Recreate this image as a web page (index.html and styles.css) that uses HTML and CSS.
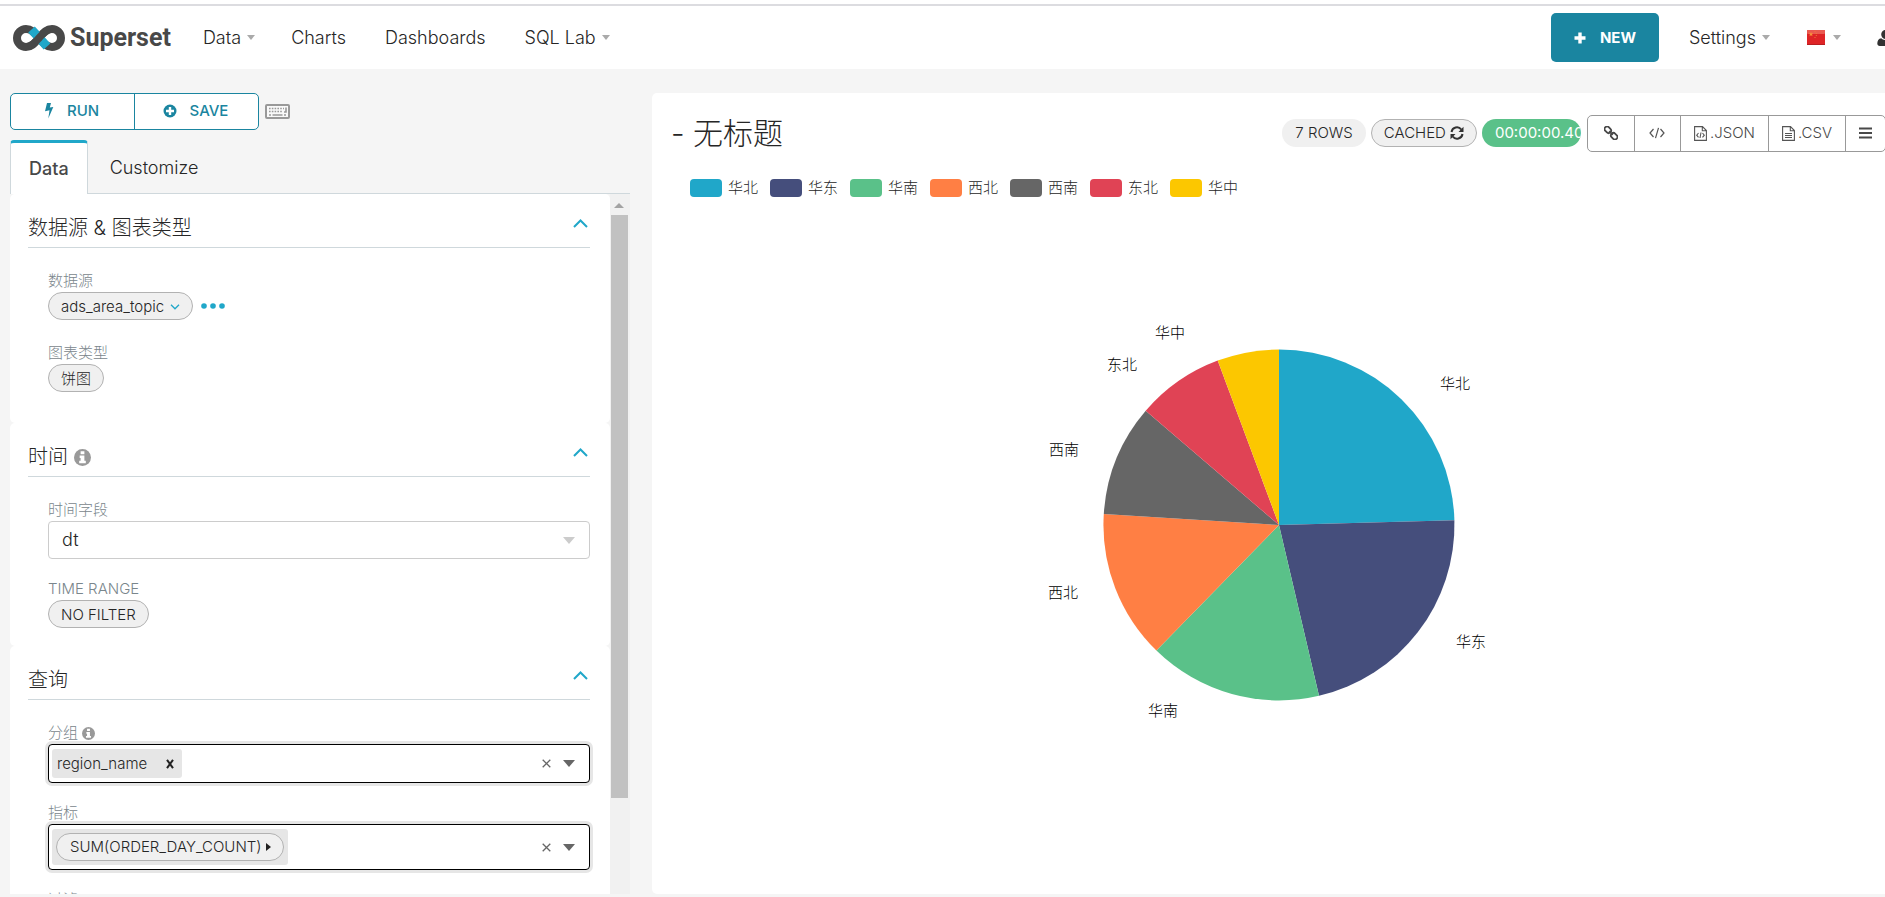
FILE: index.html
```html
<!DOCTYPE html>
<html lang="zh-CN">
<head>
<meta charset="utf-8">
<meta name="viewport" content="width=device-width, initial-scale=1">
<title>Superset</title>
<link rel="stylesheet" href="styles.css">
</head>
<body>
<header class="navbar">
  <a class="brand" href="#" aria-label="Superset">
    <svg class="brand-mark" viewBox="0 0 52 26" aria-hidden="true">
      <path d="M26 13 C21 7 18 4 13 4 A9 9 0 0 0 13 22 C18 22 21 19 26 13 C31 7 34 4 39 4 A9 9 0 0 1 39 22 C34 22 31 19 26 13" fill="none" stroke="#484848" stroke-width="8"/>
      <path d="M18.500 4.500L34 21.500" stroke="#20a7c9" stroke-width="9"/>
      <path d="M15 21.700C20 20.500 23 16.500 26 13C29 9.500 32 5.500 37 4.300" fill="none" stroke="#484848" stroke-width="7.500"/>
    </svg>
    <span class="brand-name">Superset</span>
  </a>
  <nav class="menu">
    <a href="#">Data <i class="caret"></i></a>
    <a href="#">Charts</a>
    <a href="#">Dashboards</a>
    <a href="#">SQL Lab <i class="caret"></i></a>
  </nav>
  <div class="menu-right">
    <button class="btn-new" type="button">
      <svg width="12" height="12" viewBox="0 0 12 12" aria-hidden="true"><path d="M6 0.500V11.500M0.500 6H11.500" stroke="#fff" stroke-width="3.400"/></svg>
      NEW
    </button>
    <a class="settings" href="#">Settings <i class="caret"></i></a>
    <a class="language" href="#" aria-label="中文">
      <svg width="18" height="15" viewBox="0 0 18 15" aria-hidden="true"><rect width="18" height="15" rx="1" fill="#de2426"/><rect width="18" height="4" rx="1" fill="#ea5a50"/><path d="M4 2l.7 1.500 1.600.1-1.300 1 .5 1.600L4 5.300 2.500 6.200 3 4.600l-1.300-1 1.600-.1z" fill="#f6933a"/><path d="M7.500 1.500h1M8.800 3.500h1M8.800 5.500h1M7.500 7.500h1" stroke="#ee7a3a"/><path d="M0 14.500h18" stroke="#b81d20"/></svg>
      <i class="caret"></i>
    </a>
    <a class="user" href="#" aria-label="User">
      <svg width="17" height="16" viewBox="0 0 17 16" aria-hidden="true"><path d="M4.200 4.200a4.300 4.300 0 0 1 8.600 0c0 2.600-1.900 4.800-4.300 4.800S4.200 6.800 4.200 4.200zM4.300 8.200C1.500 8.600.3 10.800.3 13.500.3 15 1.300 16 2.800 16h11.400c1.500 0 2.500-1 2.500-2.500 0-2.700-1.200-4.900-4-5.300-1.100 1.100-2.500 1.800-4.200 1.800s-3.100-.7-4.200-1.800z" fill="#323232"/></svg>
    </a>
  </div>
</header>

<main class="explore">
  <section class="controls">
    <div class="actions">
      <div class="query-buttons">
        <button type="button">
          <svg width="10" height="16" viewBox="0 0 10 16" aria-hidden="true"><path d="M3 0h4L5.800 4.600 9.300 4 4.300 15.500 5.500 7.300 1 8.300z" fill="#1a85a0"/></svg>
          RUN
        </button>
        <button type="button">
          <svg width="14" height="14" viewBox="0 0 14 14" aria-hidden="true"><circle cx="7" cy="7" r="6.500" fill="#1a85a0"/><path d="M7 3v8M3 7h8" stroke="#fff" stroke-width="2.400"/></svg>
          SAVE
        </button>
      </div>
      <svg class="keyboard" width="25" height="15" viewBox="0 0 25 15" aria-hidden="true"><rect x="1" y="1" width="23" height="13" rx="1" fill="#f9f9f9" stroke="#999" stroke-width="2"/><path d="M4 4.500h15M4 7.500h14" stroke="#999" stroke-width="1.600" stroke-dasharray="1.600 1.200"/><path d="M21 3.500v4.500h-2M4 11h2M7.500 11h10M19 11h2" fill="none" stroke="#999" stroke-width="1.600"/></svg>
    </div>
    <div class="tabs" role="tablist">
      <button class="tab tab-active" type="button" role="tab" aria-selected="true">Data</button>
      <button class="tab" type="button" role="tab" aria-selected="false">Customize</button>
    </div>
    <div class="scroller">
      <div class="sections">
        <section class="panel panel-source">
          <h2 class="panel-title">数据源 &amp; 图表类型
            <svg class="chevron" viewBox="0 0 15 9" aria-hidden="true"><path d="M1 8l6.500-6.500L14 8"/></svg></h2>
          <div class="field">
            <span class="label">数据源</span>
            <div class="source-row">
              <button class="chip" type="button">ads_area_topic
                <svg width="10" height="6" viewBox="0 0 10 6" aria-hidden="true"><path d="M1 .8l4 4 4-4" fill="none" stroke="#20a7c9" stroke-width="1.300"/></svg></button>
              <button class="more" type="button" aria-label="More">
                <svg width="24" height="6" viewBox="0 0 24 6" aria-hidden="true"><g fill="#20a7c9"><circle cx="3" cy="3" r="2.800"/><circle cx="12" cy="3" r="2.800"/><circle cx="21" cy="3" r="2.800"/></g></svg>
              </button>
            </div>
          </div>
          <div class="field">
            <span class="label">图表类型</span>
            <button class="chip" type="button">饼图</button>
          </div>
        </section>

        <section class="panel">
          <h2 class="panel-title"><span class="with-info">时间
            <svg class="info info-lg" viewBox="0 0 18 18" aria-hidden="true"><circle cx="9" cy="9" r="9" fill="#999"/><path d="M7 2.500h4v3H7zM6 7h5v5.500h1.500V15H5.500v-2.500H7v-3H6z" fill="#fff"/></svg></span>
            <svg class="chevron" viewBox="0 0 15 9" aria-hidden="true"><path d="M1 8l6.500-6.500L14 8"/></svg></h2>
          <div class="field">
            <label class="label" for="time-column">时间字段</label>
            <div class="select-wrap">
              <select id="time-column"><option>dt</option></select>
              <i class="arrow arrow-muted"></i>
            </div>
          </div>
          <div class="field">
            <span class="label">TIME RANGE</span>
            <button class="chip" type="button">NO FILTER</button>
          </div>
        </section>

        <section class="panel">
          <h2 class="panel-title">查询
            <svg class="chevron" viewBox="0 0 15 9" aria-hidden="true"><path d="M1 8l6.500-6.500L14 8"/></svg></h2>
          <div class="field">
            <label class="label with-info" for="groupby">分组
              <svg class="info" viewBox="0 0 18 18" aria-hidden="true"><circle cx="9" cy="9" r="9" fill="#999"/><path d="M7 2.500h4v3H7zM6 7h5v5.500h1.500V15H5.500v-2.500H7v-3H6z" fill="#fff"/></svg></label>
            <div class="multi">
              <span class="tag">region_name
                <button type="button" aria-label="Remove region_name"><svg width="8" height="10" viewBox="0 0 8 10" aria-hidden="true"><path d="M1 .8l6 8.400M7 .8L1 9.200" stroke="#222" stroke-width="2"/></svg></button></span>
              <input id="groupby" type="text">
              <button class="clear" type="button" aria-label="Clear"><svg width="9" height="9" viewBox="0 0 9 9" aria-hidden="true"><path d="M.7 .7l7.600 7.600M8.300 .7L.7 8.300" stroke="#666" stroke-width="1.300"/></svg></button>
              <i class="arrow"></i>
            </div>
          </div>
          <div class="field">
            <label class="label" for="metrics">指标</label>
            <div class="multi">
              <span class="tag tag-metric">
                <button class="chip" type="button">SUM(ORDER_DAY_COUNT)
                  <svg width="5" height="8" viewBox="0 0 5 8" aria-hidden="true"><path d="M0 0l5 4-5 4z" fill="#222"/></svg></button></span>
              <input id="metrics" type="text">
              <button class="clear" type="button" aria-label="Clear"><svg width="9" height="9" viewBox="0 0 9 9" aria-hidden="true"><path d="M.7 .7l7.600 7.600M8.300 .7L.7 8.300" stroke="#666" stroke-width="1.300"/></svg></button>
              <i class="arrow"></i>
            </div>
          </div>
          <div class="field"><span class="label">过滤</span></div>
        </section>
      </div>
      <div class="scrollbar" aria-hidden="true"><i class="scroll-up"></i><i class="scroll-thumb"></i></div>
    </div>
  </section>

  <section class="chart-panel">
    <div class="chart-header">
      <h1>- 无标题</h1>
      <div class="chart-tools">
        <span class="badge">7 ROWS</span>
        <button class="badge badge-cached" type="button">CACHED
          <svg width="14" height="14" viewBox="0 0 14 14" aria-hidden="true"><path d="M1.500 6A5.500 5.500 0 0 1 11.300 3.500M12.500 8A5.500 5.500 0 0 1 2.700 10.500" fill="none" stroke="#323232" stroke-width="2"/><path d="M13.500 .8V6H8.500zM.5 13.200V8h5z" fill="#323232"/></svg></button>
        <span class="badge badge-time">00:00:00.40</span>
        <div class="button-group">
          <button type="button" aria-label="Link"><svg width="14" height="14" viewBox="0 0 14 14" aria-hidden="true"><g fill="none" stroke="#484848" stroke-width="1.800" transform="rotate(45 7 7)"><rect x="-1" y="4.500" width="7" height="5" rx="2.300"/><rect x="8" y="4.500" width="7" height="5" rx="2.300"/><path d="M4.500 7h5"/></g></svg></button>
          <button type="button" aria-label="Embed code"><svg width="16" height="12" viewBox="0 0 16 12" aria-hidden="true"><path d="M4.500 2L1 6l3.500 4M11.500 2L15 6l-3.500 4M9.500 .8L6.500 11.200" fill="none" stroke="#555" stroke-width="1.200"/></svg></button>
          <button type="button"><svg width="13" height="15" viewBox="0 0 13 15" aria-hidden="true"><path d="M.6 .6h7.900l3.900 3.900v9.900H.6zM8.300 .6v4.100h4.100M4.500 7L2.700 9.200l1.800 2.200M8.500 7l1.800 2.200-1.800 2.200M7 6.500L6 12" fill="none" stroke="#555" stroke-width="1.100"/></svg>.JSON</button>
          <button type="button"><svg width="13" height="15" viewBox="0 0 13 15" aria-hidden="true"><path d="M.6 .6h7.900l3.900 3.900v9.900H.6zM8.300 .6v4.100h4.100M3 7.500h7M3 9.500h7M3 11.500h7" fill="none" stroke="#555" stroke-width="1.100"/></svg>.CSV</button>
          <button type="button" aria-label="Menu"><svg width="13" height="12" viewBox="0 0 13 12" aria-hidden="true"><path d="M0 1.500h13M0 6h13M0 10.500h13" stroke="#484848" stroke-width="2"/></svg></button>
        </div>
      </div>
    </div>
    <ul class="legend">
      <li><i class="swatch c1"></i>华北</li>
      <li><i class="swatch c2"></i>华东</li>
      <li><i class="swatch c3"></i>华南</li>
      <li><i class="swatch c4"></i>西北</li>
      <li><i class="swatch c5"></i>西南</li>
      <li><i class="swatch c6"></i>东北</li>
      <li><i class="swatch c7"></i>华中</li>
    </ul>
    <div class="chart">
      <svg width="500" height="430" viewBox="0 0 500 430" role="img" aria-label="饼图">
        <path class="c1" d="M250 225V49.500A175.500 175.500 0 0 1 425.400 220.200z"/>
        <path class="c2" d="M250 225L425.400 220.200A175.500 175.500 0 0 1 290 395.800z"/>
        <path class="c3" d="M250 225L290 395.800A175.500 175.500 0 0 1 127.400 350.600z"/>
        <path class="c4" d="M250 225L127.400 350.600A175.500 175.500 0 0 1 74.800 214z"/>
        <path class="c5" d="M250 225L74.800 214A175.500 175.500 0 0 1 116.700 110.800z"/>
        <path class="c6" d="M250 225L116.700 110.800A175.500 175.500 0 0 1 188.700 60.600z"/>
        <path class="c7" d="M250 225L188.700 60.600A175.500 175.500 0 0 1 250 49.500z"/>
        <text x="411" y="89">华北</text>
        <text x="427" y="347">华东</text>
        <text x="119" y="416">华南</text>
        <text x="19" y="298">西北</text>
        <text x="20" y="155">西南</text>
        <text x="78" y="70">东北</text>
        <text x="126" y="38">华中</text>
      </svg>
    </div>
  </section>
</main>
</body>
</html>
```

FILE: styles.css
```css
* { box-sizing: border-box; }

body {
  margin: 0;
  height: 100vh;
  display: flex;
  flex-direction: column;
  overflow: hidden;
  background: #f5f5f5;
  color: #262626;
  font-family: Inter, "Noto Sans CJK SC", sans-serif;
  font-size: 15px;
  font-weight: 300;
  line-height: 20px;
}

a { color: inherit; text-decoration: none; }
button, input, select { font: inherit; color: inherit; }
button { border: 0; padding: 0; background: none; cursor: pointer; }
svg { display: block; flex: none; }
h1, h2, ul { margin: 0; padding: 0; font-weight: 300; }
i { display: block; flex: none; }

/* Navigation */
.navbar {
  flex: none;
  display: flex;
  align-items: center;
  height: 69px;
  margin-right: -21px;
  padding: 6px 12px 0 13px;
  background: #fff linear-gradient(#dcdce0, #dcdce0) 0 4px / 100% 2px no-repeat;
  font-size: 18px;
}
.brand { display: flex; align-items: center; gap: 5px; }
.brand-mark { width: 52px; height: 26px; }
.brand-name {
  color: #484848;
  font-family: Roboto, sans-serif;
  font-size: 25px;
  font-weight: 700;
}
.menu { display: flex; gap: 39px; margin-left: 32px; }
.menu a, .menu-right a { display: flex; align-items: center; gap: 6px; }
.menu-right { display: flex; align-items: center; margin-left: auto; }
.caret {
  margin-right: -3px;
  border: 4px solid transparent;
  border-top: 5px solid #aaa;
  border-bottom: 0;
}
.btn-new {
  display: flex;
  align-items: center;
  justify-content: center;
  gap: 14px;
  width: 108px;
  height: 49px;
  border-radius: 5px;
  background: #1a85a0;
  color: #fff;
  font-size: 15px;
  font-weight: 700;
}
.settings { margin-left: 30px; }
.language { margin-left: 40px; }
.menu-right .language { gap: 8px; }
.user { margin-left: 39px; }

/* Page columns */
.explore {
  flex: 1;
  min-height: 0;
  display: flex;
  gap: 22px;
  margin-right: -21px;
  padding: 24px 0 3px 10px;
}
.controls { flex: none; width: 620px; display: flex; flex-direction: column; }

.actions { display: flex; align-items: center; gap: 6px; }
.query-buttons { display: flex; width: 249px; border: 1px solid #1a85a0; border-radius: 5px; background: #fff; }
.query-buttons button {
  flex: 1;
  display: flex;
  align-items: center;
  justify-content: center;
  gap: 13px;
  height: 35px;
  padding: 0 2px 2px 0;
  color: #1a85a0;
  font-weight: 500;
}
.query-buttons button + button { border-left: 1px solid #1a85a0; }

.tabs { display: flex; margin-top: 10px; border-bottom: 1px solid #cfd8dc; font-size: 18px; }
.tab { height: 53px; padding: 2px 22px 0; }
.tab-active {
  margin-bottom: -1px;
  height: 54px;
  padding: 0 18px;
  border: 1px solid #cfd8dc;
  border-top: 3px solid #20a7c9;
  border-bottom: 0;
  border-radius: 4px 4px 0 0;
  background: #fff;
  color: #484848;
  font-weight: 500;
}

.scroller { flex: 1; min-height: 0; display: flex; }
.sections { flex: 1; overflow: hidden; }
.scrollbar { width: 20px; padding: 0 2px 0 1px; background: #f1f1f1; }
.scroll-up {
  width: 10px;
  margin: 9px 3px 7px;
  border: 5px solid transparent;
  border-top: 0;
  border-bottom: 5px solid #a3a3a3;
}
.scroll-thumb { height: 83.3%; background: #c1c1c1; }

/* Control panels */
.panel {
  display: flex;
  flex-direction: column;
  gap: 19px;
  padding: 19px 20px 18px 18px;
  border-radius: 5px;
  background: #fff;
}
.panel-source { gap: 22px; padding-bottom: 31px; }
.panel-title {
  display: flex;
  justify-content: space-between;
  margin-bottom: 3px;
  padding-bottom: 4px;
  border-bottom: 1px solid #cfd8dc;
  font-size: 20px;
  line-height: 30px;
}
.panel-source .panel-title { margin-bottom: 0; }
.chevron { width: 15px; height: 9px; margin: 6px 2px 0 0; fill: none; stroke: #20a7c9; stroke-width: 2; }
.with-info { display: flex; align-items: center; gap: 6px; }
.info { width: 13px; height: 13px; }
.info-lg { width: 17px; height: 17px; }
.field { display: flex; flex-direction: column; align-items: flex-start; padding-left: 20px; }
.label { color: #7a868c; line-height: 22px; }
.label.with-info { gap: 4px; }
.source-row { display: flex; align-items: center; gap: 8px; }
.chip {
  display: flex;
  align-items: center;
  gap: 6px;
  height: 28px;
  padding: 1px 12px 0;
  border: 1px solid #b2b2b2;
  border-radius: 14px;
  background: #f0f0f0;
}

.select-wrap { align-self: stretch; display: grid; align-items: center; }
.select-wrap > * { grid-area: 1 / 1; }
.select-wrap select {
  height: 38px;
  padding: 0 13px;
  border: 1px solid #ccc;
  border-radius: 4px;
  background: #fff;
  appearance: none;
  font-size: 18px;
}
.arrow { border: 6px solid transparent; border-top: 7px solid #666; border-bottom: 0; }
.arrow-muted { justify-self: end; margin-right: 15px; border-top-color: #ccc; pointer-events: none; }

.multi {
  align-self: stretch;
  display: flex;
  align-items: center;
  padding: 4px 14px 4px 3px;
  border: 1px solid #000;
  border-radius: 4px;
  background: #fff;
  box-shadow: 0 0 0 3px #e6e6e6;
}
.multi input { flex: 1; min-width: 0; border: 0; outline: 0; background: none; }
.clear { margin-right: 12px; }
.tag {
  display: flex;
  align-items: center;
  gap: 19px;
  height: 29px;
  padding: 0 8px 0 5px;
  border-radius: 3px;
  background: #e6e6e6;
}
.tag-metric { height: 36px; padding: 0 4px; }
.tag-metric .chip { gap: 4px; padding: 0 12px 0 13px; }

/* Chart */
.chart-panel {
  flex: 1;
  min-width: 0;
  display: flex;
  flex-direction: column;
  border-radius: 5px;
  background: #fff;
}
.chart-header { display: flex; align-items: center; justify-content: space-between; padding: 20px 20px 0 19px; }
.chart-header h1 { font-size: 30px; line-height: 40px; }
.chart-tools { display: flex; align-items: center; }
.badge {
  display: flex;
  align-items: center;
  gap: 4px;
  height: 28px;
  margin-right: 5px;
  padding: 0 13px;
  border-radius: 14px;
  background: #f0f0f0;
  white-space: nowrap;
}
.badge-cached { padding: 0 12px; border: 1px solid #b2b2b2; }
.badge-time {
  width: 99px;
  margin-right: 6px;
  padding-right: 0;
  overflow: hidden;
  background: #5ac189;
  color: #fff;
  font-weight: 400;
}
.button-group { display: flex; border: 1px solid #999; border-radius: 5px; color: #484848; }
.button-group button { display: flex; align-items: center; gap: 3px; height: 35px; padding: 0 13px; }
.button-group button:nth-child(-n+2) { width: 46px; justify-content: center; }
.button-group button + button { border-left: 1px solid #999; }

.legend { display: flex; gap: 12px; padding: 25px 38px 0; list-style: none; }
.legend li { display: flex; align-items: center; gap: 6px; }
.swatch { width: 32px; height: 18px; border-radius: 4px; }
.chart { flex: 1; display: flex; align-items: center; justify-content: center; padding-bottom: 63px; }
.chart text { fill: #000; font-size: 15px; }

.c1 { fill: #20a7c9; background: #20a7c9; }
.c2 { fill: #454e7c; background: #454e7c; }
.c3 { fill: #5ac189; background: #5ac189; }
.c4 { fill: #ff7f44; background: #ff7f44; }
.c5 { fill: #666; background: #666; }
.c6 { fill: #e04355; background: #e04355; }
.c7 { fill: #fcc700; background: #fcc700; }
```
